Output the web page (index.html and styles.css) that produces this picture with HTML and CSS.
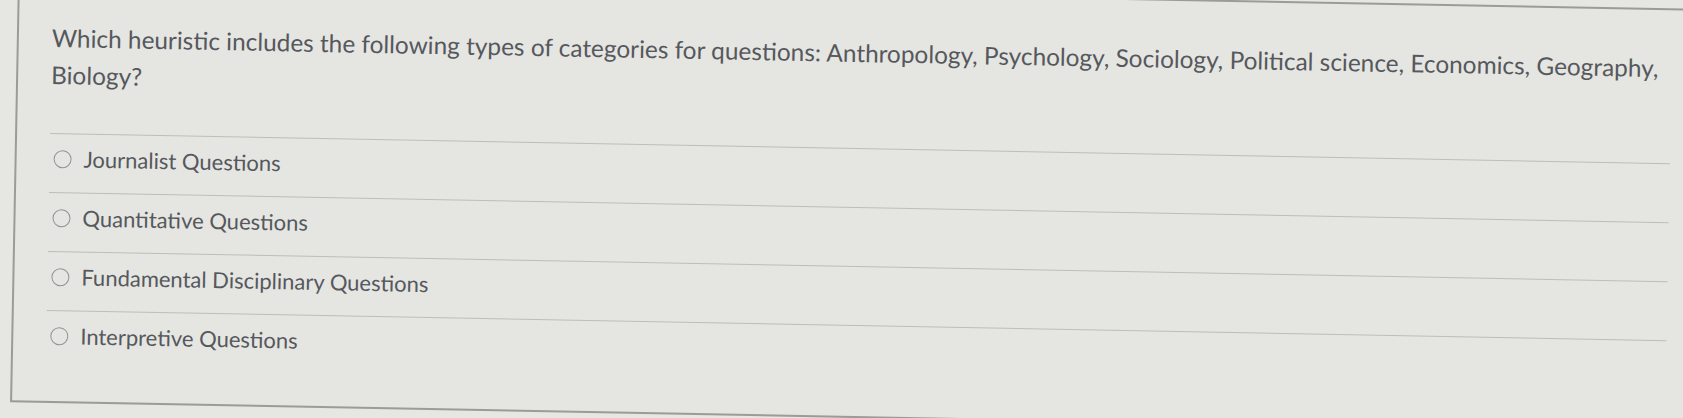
FILE: index.html
```html
<!DOCTYPE html>
<html lang="en">
<head>
<meta charset="utf-8">
<title>Quiz question</title>
<link rel="stylesheet" href="styles.css">
</head>
<body>
<div class="stage">
  <section class="card">
    <p class="question">Which heuristic includes the following types of categories for questions: Anthropology, Psychology, Sociology, Political science, Economics, Geography, Biology?</p>
    <div class="answers">
      <label class="answer"><span class="radio"></span><span class="label">Journalist Questions</span></label>
      <label class="answer"><span class="radio"></span><span class="label">Quantitative Questions</span></label>
      <label class="answer"><span class="radio"></span><span class="label">Fundamental Disciplinary Questions</span></label>
      <label class="answer"><span class="radio"></span><span class="label">Interpretive Questions</span></label>
    </div>
  </section>
</div>
</body>
</html>
```

FILE: styles.css
```css
html, body {
  margin: 0;
  padding: 0;
  background: #e6e6e2;
  overflow: hidden;
  height: 100%;
}

body {
  font-family: "Lato", "Open Sans", sans-serif;
  color: #55585d;
}

.stage {
  width: 1720px;
  transform: rotate(1.07deg);
  transform-origin: 0 0;
}

.card {
  margin: -23px 0 0 18px;
  border: 2px solid #9b9b99;
  padding: 39px 30px 32px 33px;
  background: #e5e5e1;
}

.question {
  margin: 0 0 40px 0;
  width: 1620px;
  font-size: 24.4px;
  line-height: 37px;
}

.answers {
  display: flex;
  flex-direction: column;
  width: 1620px;
}

.answer {
  box-sizing: border-box;
  display: flex;
  align-items: center;
  gap: 12px;
  height: 59px;
  border-top: 1px solid #bdbdbb;
  padding: 0 0 8px 4px;
  font-size: 22px;
}

.radio {
  width: 16px;
  height: 16px;
  border: 1.8px solid #929396;
  border-radius: 50%;
  flex: none;
}

.label {
  line-height: 26px;
}
```
